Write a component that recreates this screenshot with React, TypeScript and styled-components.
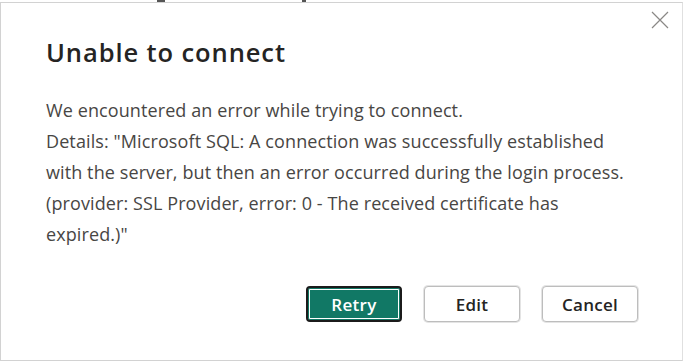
import React from "react";
import styled, { createGlobalStyle } from "styled-components";

const GlobalStyle = createGlobalStyle`
  html, body {
    margin: 0;
    padding: 0;
    background: #e6e6e6;
  }
  body {
    font-family: "Open Sans", "Noto Sans", Arial, sans-serif;
    width: 684px;
    height: 364px;
    overflow: hidden;
  }
`;

const Page = styled.div`
  width: 684px;
  height: 364px;
  display: flex;
  flex-direction: column;
  background: #ffffff;
`;

// sliver of the window behind the dialog
const TopStrip = styled.div`
  height: 2px;
  display: flex;
  align-items: flex-end;
  background: #ffffff;
`;

const Mark = styled.span<{ $left: number; $width: number }>`
  display: block;
  height: 2px;
  width: ${(p) => p.$width}px;
  margin-left: ${(p) => p.$left}px;
  background: #555;
`;

const Dialog = styled.div`
  width: 683px;
  height: 359px;
  box-sizing: border-box;
  border: 1px solid #d2d2d2;
  border-right-color: #e0e0e0;
  background: #ffffff;
  display: flex;
  flex-direction: column;
  padding: 0 44px 0 45px;
`;

const Header = styled.div`
  display: flex;
  justify-content: space-between;
  align-items: flex-start;
  height: 92px;
  margin-right: -34px;
`;

const Title = styled.h1`
  margin: 33px 0 0;
  font-size: 25.5px;
  line-height: 32px;
  font-weight: 600;
  color: #252423;
  letter-spacing: 0.9px;
`;

const CloseButton = styled.button`
  margin-top: 5px;
  width: 24px;
  height: 24px;
  padding: 0;
  border: none;
  background: transparent;
  display: flex;
  align-items: center;
  justify-content: center;
  cursor: pointer;
`;

const Body = styled.p`
  margin: 0;
  font-size: 18px;
  line-height: 31px;
  color: #484644;
  letter-spacing: 0.1px;
  white-space: nowrap;
`;

const Footer = styled.div`
  margin-top: auto;
  margin-bottom: 38px;
  display: flex;
  justify-content: flex-end;
  gap: 22px;
`;

const Button = styled.button<{ $primary?: boolean }>`
  width: 96px;
  height: 36px;
  box-sizing: border-box;
  border-radius: 4px;
  font-family: inherit;
  font-size: 17px;
  font-weight: 600;
  letter-spacing: 0.3px;
  cursor: pointer;
  color: ${(p) => (p.$primary ? "#ffffff" : "#252423")};
  background: ${(p) => (p.$primary ? "#117865" : "#ffffff")};
  border: ${(p) => (p.$primary ? "2px solid #1b1b1b" : "1px solid #bdbdbd")};
  box-shadow: ${(p) =>
    p.$primary
      ? "inset 0 0 0 1px #117865, inset 0 0 0 2px #ffffff"
      : "0 0 0 1px #e4e4e4"};
`;

const CloseIcon: React.FC = () => (
  <svg width="18" height="18" viewBox="0 0 18 18">
    <path d="M1 1 L17 17 M17 1 L1 17" stroke="#8a8886" strokeWidth="1.2" fill="none" />
  </svg>
);

const App: React.FC = () => (
  <Page>
    <GlobalStyle />
    <TopStrip>
      <Mark $left={157} $width={8} />
      <Mark $left={137} $width={4} />
    </TopStrip>
    <Dialog>
      <Header>
        <Title>Unable to connect</Title>
        <CloseButton aria-label="Close">
          <CloseIcon />
        </CloseButton>
      </Header>
      <Body>
        We encountered an error while trying to connect.
        <br />
        Details: "Microsoft SQL: A connection was successfully established
        <br />
        with the server, but then an error occurred during the login process.
        <br />
        (provider: SSL Provider, error: 0 - The received certificate has
        <br />
        expired.)"
      </Body>
      <Footer>
        <Button $primary>Retry</Button>
        <Button>Edit</Button>
        <Button>Cancel</Button>
      </Footer>
    </Dialog>
  </Page>
);

export default App;
